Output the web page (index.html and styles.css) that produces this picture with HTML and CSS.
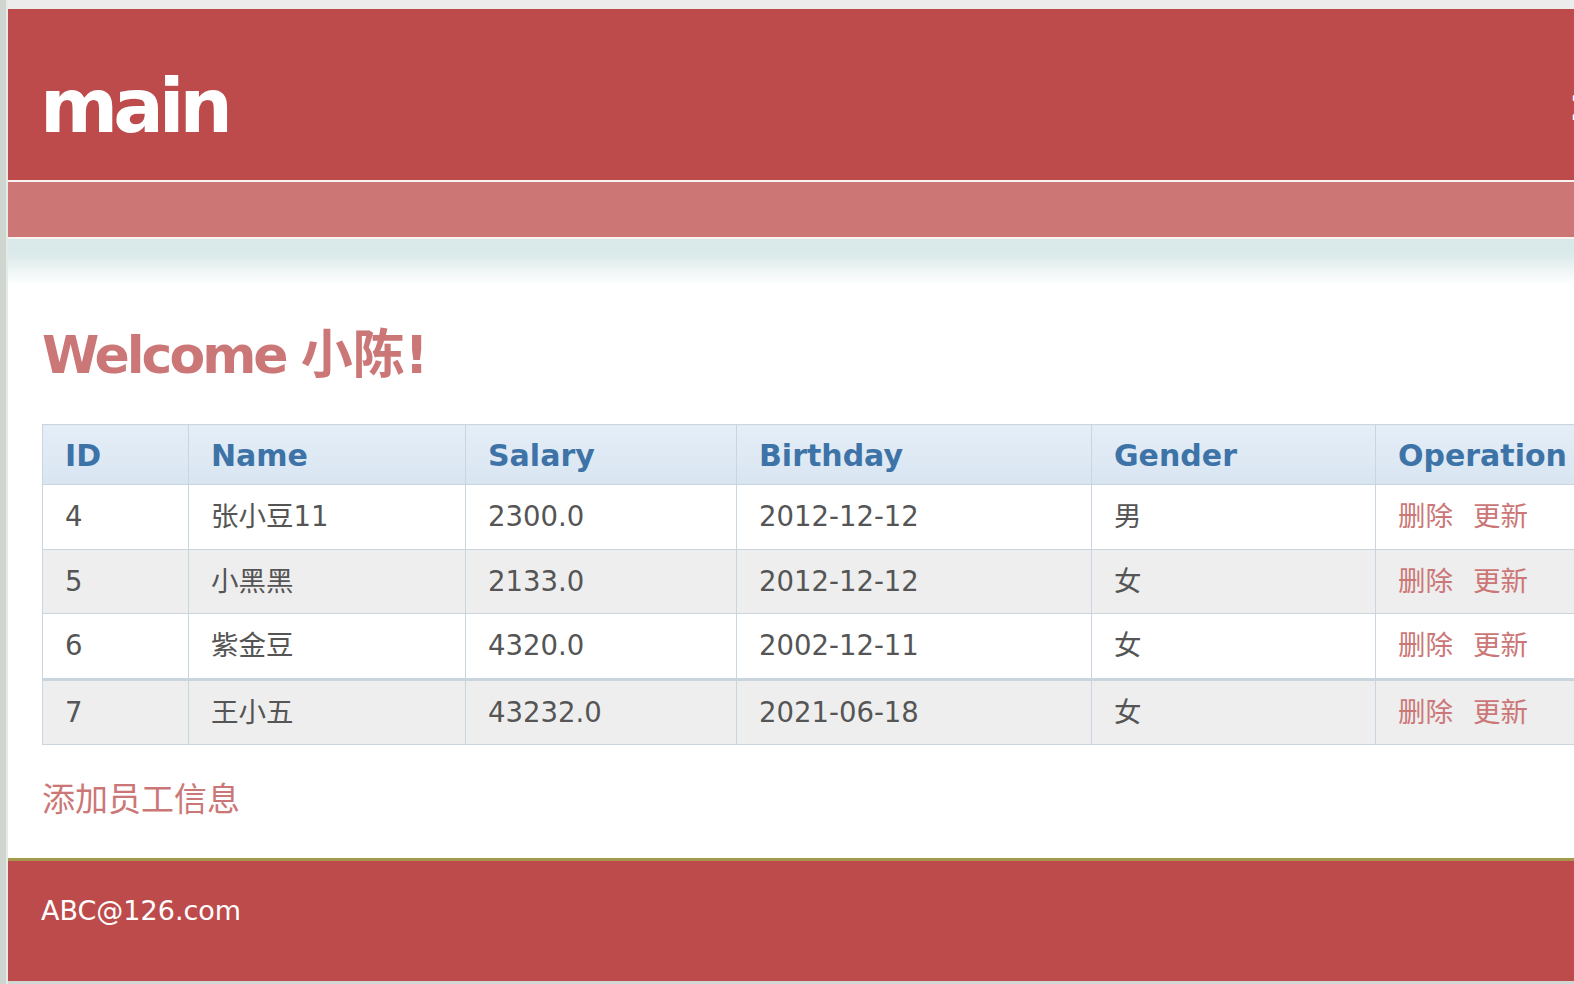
FILE: index.html
```html
<!DOCTYPE html>
<html lang="zh-CN">
<head>
<meta charset="utf-8">
<title>main</title>
<link rel="stylesheet" href="styles.css">
</head>
<body>
<div class="wrap">
  <header class="top">
    <h1 class="logo">main</h1>
    <p class="date">2021/06/18</p>
  </header>
  <nav class="menu"></nav>
  <main class="content">
    <h2 class="welcome">Welcome <span class="cn">小陈</span>!</h2>
    <table class="emp">
      <colgroup>
        <col class="c-id">
        <col class="c-name">
        <col class="c-salary">
        <col class="c-birth">
        <col class="c-gender">
        <col class="c-op">
      </colgroup>
      <thead>
        <tr><th>ID</th><th>Name</th><th>Salary</th><th>Birthday</th><th>Gender</th><th>Operation</th></tr>
      </thead>
      <tbody>
        <tr><td>4</td><td>张小豆11</td><td>2300.0</td><td>2012-12-12</td><td>男</td><td class="ops"><a href="#">删除</a><a href="#">更新</a></td></tr>
        <tr class="alt"><td>5</td><td>小黑黑</td><td>2133.0</td><td>2012-12-12</td><td>女</td><td class="ops"><a href="#">删除</a><a href="#">更新</a></td></tr>
        <tr><td>6</td><td>紫金豆</td><td>4320.0</td><td>2002-12-11</td><td>女</td><td class="ops"><a href="#">删除</a><a href="#">更新</a></td></tr>
        <tr class="alt last"><td>7</td><td>王小五</td><td>43232.0</td><td>2021-06-18</td><td>女</td><td class="ops"><a href="#">删除</a><a href="#">更新</a></td></tr>
      </tbody>
    </table>
    <p class="add"><a href="#">添加员工信息</a></p>
  </main>
  <footer class="foot">ABC@126.com</footer>
</div>
</body>
</html>
```

FILE: styles.css
```css
html {
  overflow: hidden;
}

body {
  margin: 0;
  padding: 9px 0 0 8px;
  background: linear-gradient(to right, #cfd6d0 0, #cfd6d0 6px, #e6eae7 6px, #e6eae7 8px, #ececec 8px);
  font-family: "DejaVu Sans", Verdana, "Noto Sans CJK SC", sans-serif;
}

.wrap {
  width: 1680px;
  background: #fff;
}

.top {
  display: flex;
  align-items: flex-start;
  height: 171px;
  padding-left: 32px;
  background: #bd4b4b;
  border-bottom: 2px solid #fbf2f2;
}

.logo {
  flex: none;
  width: 1530px;
  margin: 0;
  padding-top: 60px;
  font: bold 75px/75px "DejaVu Sans", Verdana, sans-serif;
  letter-spacing: -5px;
  color: #fff;
}

.date {
  margin: 0;
  padding-top: 78px;
  font: bold 36px/42px "DejaVu Sans", Verdana, sans-serif;
  color: #fff;
  white-space: nowrap;
}

.menu {
  height: 55px;
  background: #cc7676;
  border-bottom: 2px solid #fbf2f2;
}

.content {
  padding: 82px 34px 38px;
  background: linear-gradient(#d9e8e8 0, #dae9e9 14px, #ffffff 46px);
}

.welcome {
  margin: 0;
  font: bold 52px/60px "DejaVu Sans", Verdana, "Noto Sans CJK SC", sans-serif;
  letter-spacing: -3px;
  color: #cc7777;
}

.welcome .cn {
  letter-spacing: 0;
  font-family: "Noto Sans CJK SC", sans-serif;
}

.emp {
  margin-top: 39px;
  width: 1612px;
  table-layout: fixed;
  border-collapse: collapse;
}

.c-id { width: 146px; }
.c-name { width: 277px; }
.c-salary { width: 271px; }
.c-birth { width: 355px; }
.c-gender { width: 284px; }
.c-op { width: 279px; }

.emp th,
.emp td {
  padding: 0 0 0 22px;
  text-align: left;
  border: 1px solid #c9d5df;
  white-space: nowrap;
}

.emp th {
  height: 57px;
  padding-top: 2px;
  font: bold 30px/1 "DejaVu Sans", Verdana, sans-serif;
  color: #3d73a7;
  background: linear-gradient(#e5eef7, #d8e5f1);
}

.emp td {
  height: 63.5px;
  font: 27.5px/1 "DejaVu Sans", Verdana, "Noto Sans CJK SC", sans-serif;
  color: #555;
  background: #fff;
}

.emp tr.alt td {
  background: #eeeeee;
}

.emp tr.last td {
  border-top: 3px solid #cad4dc;
}

.ops a {
  color: #cc7777;
  text-decoration: none;
  margin-right: 20px;
}

.add {
  margin: 35px 0 0;
  font: 33px/40px "DejaVu Sans", Verdana, "Noto Sans CJK SC", sans-serif;
}

.add a {
  color: #cc7777;
  text-decoration: none;
}

.foot {
  padding: 30px 34px 50px 33px;
  font: 27px/40px "DejaVu Sans", Verdana, sans-serif;
  color: #fff;
  background: #bd4b4b;
  border-top: 3px solid #a4984c;
  border-bottom: 6px solid #d3d7d3;
}
```
